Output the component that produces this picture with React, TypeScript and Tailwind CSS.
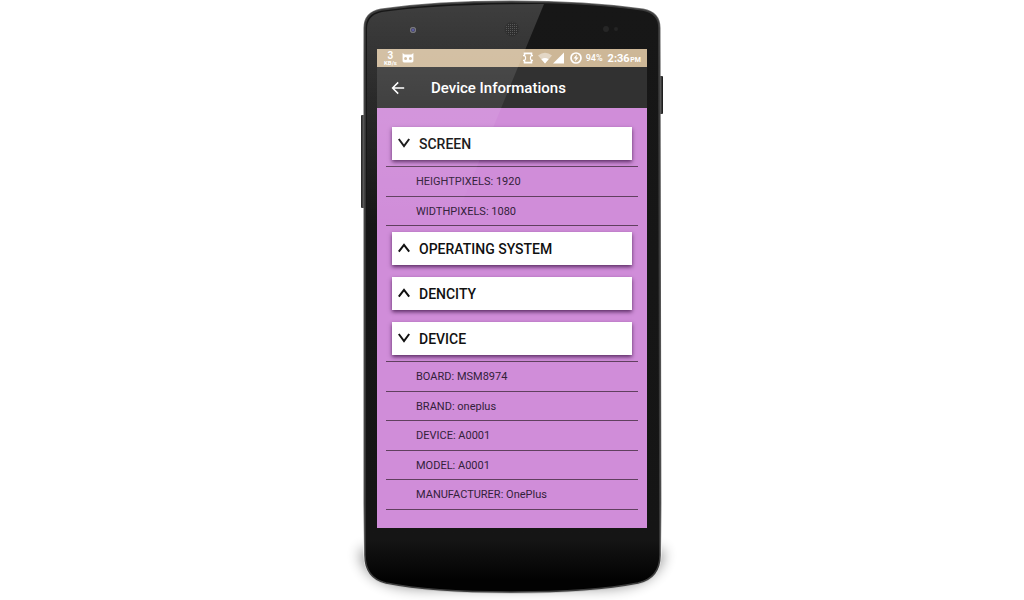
import React, { useState } from 'react';

interface Detail {
  label: string;
  value: string;
}

interface Section {
  title: string;
  open: boolean;
  details: Detail[];
}

const initialSections: Section[] = [
  {
    title: 'SCREEN',
    open: true,
    details: [
      { label: 'HEIGHTPIXELS', value: '1920' },
      { label: 'WIDTHPIXELS', value: '1080' },
    ],
  },
  { title: 'OPERATING SYSTEM', open: false, details: [] },
  { title: 'DENCITY', open: false, details: [] },
  {
    title: 'DEVICE',
    open: true,
    details: [
      { label: 'BOARD', value: 'MSM8974' },
      { label: 'BRAND', value: 'oneplus' },
      { label: 'DEVICE', value: 'A0001' },
      { label: 'MODEL', value: 'A0001' },
      { label: 'MANUFACTURER', value: 'OnePlus' },
    ],
  },
];

const bodyPath =
  'M23 40 V28 Q23 13 39 10 Q95 2 170 2 Q245 2 301 10 Q317 13 317 28 V40 L318 555 Q318 578 296 583 Q250 592 170 592 Q90 592 44 583 Q23 578 23 555 Z';

// Phone case, buttons, camera and speaker
function PhoneBody() {
  return (
    <svg className="absolute inset-0 h-full w-full" viewBox="0 0 340 600" aria-hidden="true">
      <defs>
        <linearGradient id="case" x1="0" y1="0" x2="0" y2="1">
          <stop offset="0" stopColor="#171717" />
          <stop offset="0.91" stopColor="#151515" />
          <stop offset="0.98" stopColor="#020202" />
        </linearGradient>
        <linearGradient id="highlight" x1="0" y1="0" x2="0" y2="1">
          <stop offset="0" stopColor="#7a7a7a" />
          <stop offset="0.1" stopColor="#555555" />
          <stop offset="0.85" stopColor="#666666" />
          <stop offset="0.93" stopColor="#ffffff" />
          <stop offset="1" stopColor="#bbbbbb" />
        </linearGradient>
        <linearGradient id="key" x1="0" y1="0" x2="1" y2="0">
          <stop offset="0" stopColor="#222222" />
          <stop offset="0.5" stopColor="#555555" />
          <stop offset="1" stopColor="#111111" />
        </linearGradient>
        <radialGradient id="lens">
          <stop offset="0" stopColor="#4a4ad0" />
          <stop offset="0.5" stopColor="#30304e" />
          <stop offset="1" stopColor="#7c7c7c" />
        </radialGradient>
        <pattern id="mesh" width="2" height="2" patternUnits="userSpaceOnUse">
          <rect width="2" height="2" fill="#0a0a0a" />
          <rect width="1" height="1" fill="#3c3c3c" />
        </pattern>
        <filter id="soft" x="-20%" y="-50%" width="140%" height="200%">
          <feGaussianBlur stdDeviation="7" />
        </filter>
      </defs>
      <path d="M18 550 Q20 586 80 588 L260 588 Q320 586 322 550 Z" fill="#000000" opacity="0.45" filter="url(#soft)" />
      <rect x="19" y="115" width="5" height="93" rx="1" fill="url(#key)" />
      <rect x="316" y="76" width="5" height="38" rx="1" fill="url(#key)" />
      <path d={bodyPath} fill="none" stroke="url(#highlight)" strokeWidth="3" />
      <path d={bodyPath} fill="url(#case)" stroke="#3d3d3d" strokeWidth="1.6" />
      <circle cx="71" cy="30" r="3" fill="url(#lens)" />
      <circle cx="170" cy="29" r="7" fill="url(#mesh)" stroke="#0e0e0e" strokeWidth="1" />
      <circle cx="264" cy="29" r="3" fill="#262626" />
      <circle cx="274" cy="29" r="2" fill="#242424" />
    </svg>
  );
}

// Light reflection lying over the glass
function Gloss() {
  return (
    <svg className="pointer-events-none absolute inset-0 h-full w-full" viewBox="0 0 340 600" aria-hidden="true">
      <defs>
        <linearGradient id="gloss" x1="0" y1="0" x2="0" y2="1">
          <stop offset="0" stopColor="#ffffff" stopOpacity="0.17" />
          <stop offset="0.33" stopColor="#ffffff" stopOpacity="0.08" />
          <stop offset="0.75" stopColor="#ffffff" stopOpacity="0" />
        </linearGradient>
      </defs>
      <path d="M25 300 V29 Q25 15 40 12 Q95 4 202 4 L80 300 Z" fill="url(#gloss)" />
    </svg>
  );
}

function StatusBar() {
  return (
    <div className="flex h-[18px] items-center justify-between bg-[#cdb797] pl-[7px] pr-[6px] text-white">
      <div className="flex items-center gap-[5px]">
        <div className="flex flex-col items-center font-bold">
          <span className="text-[10px] leading-[9px]">3</span>
          <span className="text-[6px] leading-[6px]">KB/s</span>
        </div>
        <svg className="h-[10px] w-[12px]" viewBox="0 0 12 10" aria-hidden="true">
          <path
            fill="currentColor"
            fillRule="evenodd"
            d="M.6 0 L2.6 1.4 H9.4 L11.4 0 V8 Q11.4 9.4 10 9.4 H2 Q.6 9.4 .6 8 Z M3.6 4 A1.5 1.5 0 1 0 3.6 7 A1.5 1.5 0 1 0 3.6 4 Z M8.4 4 A1.5 1.5 0 1 0 8.4 7 A1.5 1.5 0 1 0 8.4 4 Z"
          />
        </svg>
      </div>
      <div className="flex items-center">
        <svg className="mr-[5px] h-[12px] w-[10px]" viewBox="0 0 10 12" fill="none" stroke="currentColor" strokeWidth="1.6" aria-hidden="true">
          <path d="M1.5 3.5 V1.4 H8.5 V3.5 M1.5 8.5 V10.6 H8.5 V8.5" />
          <path d="M0 3.6 H1.5 L2.5 5 V7 L1.5 8.4 H0 M10 3.6 H8.5 L7.5 5 V7 L8.5 8.4 H10" strokeWidth="1.2" />
        </svg>
        <svg className="mr-px h-[12px] w-[14px]" viewBox="0 0 14 12" fill="currentColor" aria-hidden="true">
          <path d="M7 11.5 L0 3.4 Q7 -2 14 3.4 Z" opacity="0.45" />
          <path d="M7 11.5 L3.4 7.2 Q7 4.6 10.6 7.2 Z" />
        </svg>
        <svg className="mr-[6px] h-[12px] w-[11px]" viewBox="0 0 11 12" fill="currentColor" aria-hidden="true">
          <path d="M0 11.4 L11 .6 V11.4 Z" />
        </svg>
        <svg className="mr-[4px] h-[12px] w-[12px]" viewBox="0 0 12 12" aria-hidden="true">
          <circle cx="6" cy="6" r="5" fill="none" stroke="currentColor" strokeWidth="1.7" />
          <path d="M7 2.2 L3.4 6.6 H5.6 L5 9.8 L8.6 5.4 H6.4 Z" fill="currentColor" />
        </svg>
        <span className="mr-[5px] text-[9px] font-medium leading-none">94%</span>
        <span className="text-[11px] font-bold leading-none">
          2:36 <span className="-ml-[2px] text-[7px]">PM</span>
        </span>
      </div>
    </div>
  );
}

function AppBar() {
  return (
    <header className="flex h-[41px] items-center bg-[#313131] pl-[14px] pt-px text-white">
      <button type="button" aria-label="Back" className="h-[14px] w-[14px]">
        <svg className="h-full w-full" viewBox="0 0 14 14" fill="none" stroke="currentColor" strokeWidth="1.5" aria-hidden="true">
          <path d="M13.2 7 H2 M7.2 1.4 L1.6 7 L7.2 12.6" />
        </svg>
      </button>
      <h1 className="ml-[26px] text-[15px] font-medium leading-5">Device Informations</h1>
    </header>
  );
}

interface SectionPanelProps {
  section: Section;
  onToggle: () => void;
}

function SectionPanel({ section, onToggle }: SectionPanelProps) {
  return (
    <section>
      <div className="px-[6px] py-[6px]">
        <button
          type="button"
          onClick={onToggle}
          aria-expanded={section.open}
          className="flex h-[33px] w-full items-center gap-[9px] bg-white pl-[6px] pt-px text-left text-[14px] font-medium text-[#111111] shadow-[0_2px_4px_rgba(40,0,50,0.7)]"
        >
          <svg className="mb-[2px] h-[10px] w-[12px]" viewBox="0 0 12 10" fill="none" stroke="#111111" strokeWidth="2" aria-hidden="true">
            <path d={section.open ? 'M.8 1 L6 8 L11.2 1' : 'M.8 8.6 L6 1.8 L11.2 8.6'} />
          </svg>
          {section.title}
        </button>
      </div>
      {section.open && section.details.length > 0 && (
        <ul className="border-t border-[#60405f]">
          {section.details.map((detail) => (
            <li
              key={detail.label}
              className="flex items-center border-b border-[#60405f] pl-[30px] pt-[2px] text-[11px] text-[#33213a] odd:h-[30px] even:h-[29px]"
            >
              {detail.label}: {detail.value}
            </li>
          ))}
        </ul>
      )}
    </section>
  );
}

export default function App() {
  const [sections, setSections] = useState<Section[]>(initialSections);

  const toggleSection = (title: string) => {
    setSections((prev) => prev.map((s) => (s.title === title ? { ...s, open: !s.open } : s)));
  };

  return (
    <main className="flex justify-center bg-white font-['Roboto',sans-serif]">
      <div className="relative w-[340px] px-[35px] pt-[49px] pb-[72px]">
        <PhoneBody />
        <div className="relative min-h-[479px] bg-[#d08dd9]">
          <StatusBar />
          <AppBar />
          <div className="px-[9px] pt-[13px] pb-[18px]">
            {sections.map((section) => (
              <SectionPanel key={section.title} section={section} onToggle={() => toggleSection(section.title)} />
            ))}
          </div>
        </div>
        <Gloss />
      </div>
    </main>
  );
}
